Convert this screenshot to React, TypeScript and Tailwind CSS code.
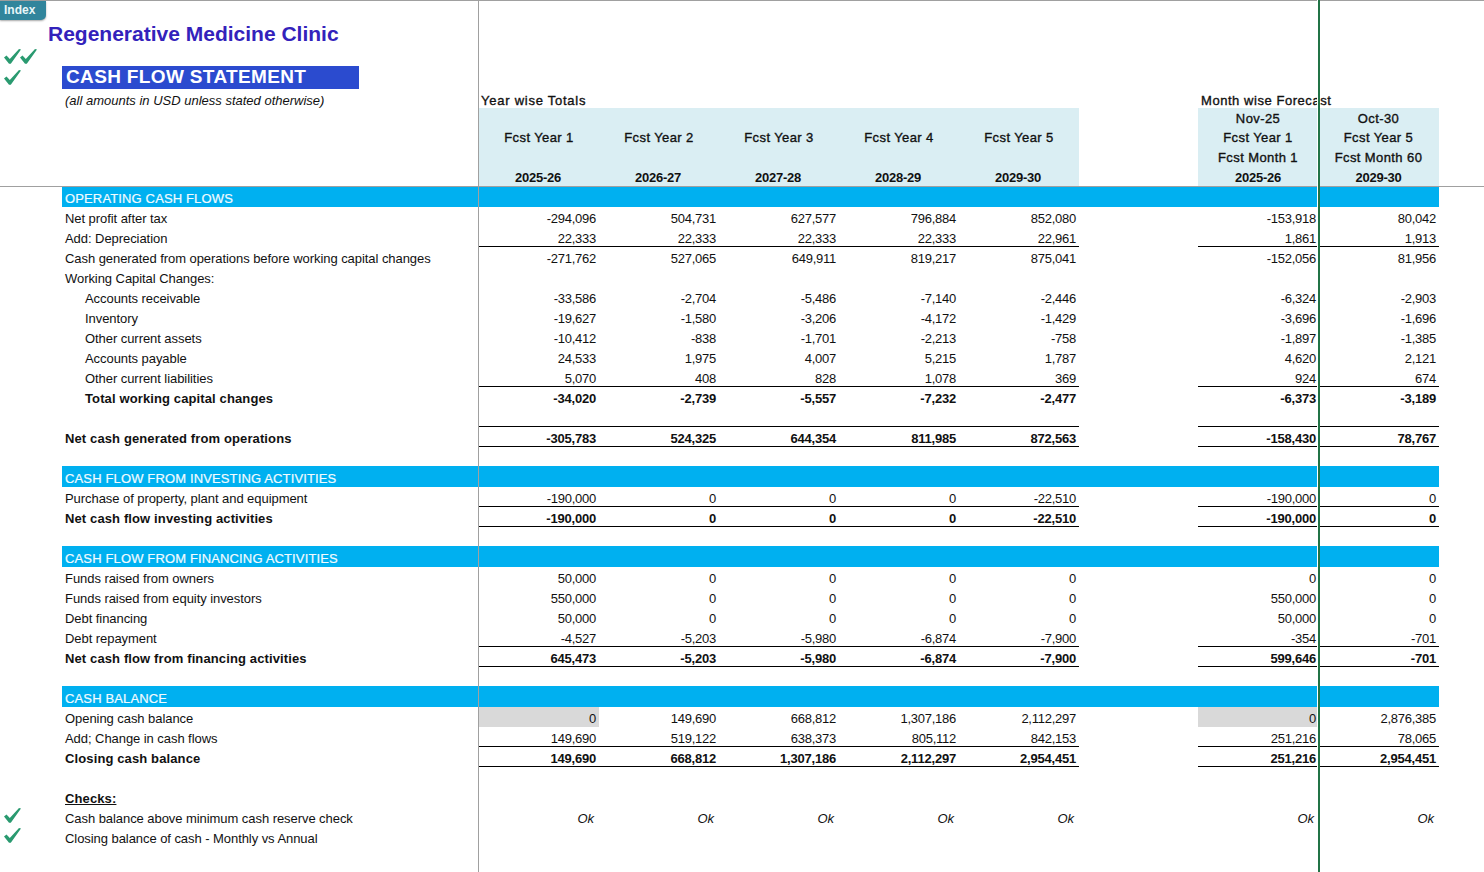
const GRID = "grid grid-cols-[62px_417px_repeat(5,120px)_119px_120px_121px] grid-rows-[20px] h-5 text-[13px] text-[#111]";

type R = {
  label?: string;
  vals?: string[];
  bold?: boolean;
  indent?: boolean;
  line?: boolean;
  grey?: boolean;
  ok?: boolean;
  check?: boolean;
  under?: boolean;
  band?: boolean;
};

const rows: R[] = [
  { band: true, label: "OPERATING CASH FLOWS" },
  { label: "Net profit after tax", vals: ["-294,096", "504,731", "627,577", "796,884", "852,080", "-153,918", "80,042"] },
  { label: "Add: Depreciation", vals: ["22,333", "22,333", "22,333", "22,333", "22,961", "1,861", "1,913"], line: true },
  { label: "Cash generated from operations before working capital changes", vals: ["-271,762", "527,065", "649,911", "819,217", "875,041", "-152,056", "81,956"] },
  { label: "Working Capital Changes:" },
  { label: "Accounts receivable", indent: true, vals: ["-33,586", "-2,704", "-5,486", "-7,140", "-2,446", "-6,324", "-2,903"] },
  { label: "Inventory", indent: true, vals: ["-19,627", "-1,580", "-3,206", "-4,172", "-1,429", "-3,696", "-1,696"] },
  { label: "Other current assets", indent: true, vals: ["-10,412", "-838", "-1,701", "-2,213", "-758", "-1,897", "-1,385"] },
  { label: "Accounts payable", indent: true, vals: ["24,533", "1,975", "4,007", "5,215", "1,787", "4,620", "2,121"] },
  { label: "Other current liabilities", indent: true, vals: ["5,070", "408", "828", "1,078", "369", "924", "674"], line: true },
  { label: "Total working capital changes", indent: true, bold: true, vals: ["-34,020", "-2,739", "-5,557", "-7,232", "-2,477", "-6,373", "-3,189"] },
  { line: true, vals: ["", "", "", "", "", "", ""] },
  { label: "Net cash generated from operations", bold: true, line: true, vals: ["-305,783", "524,325", "644,354", "811,985", "872,563", "-158,430", "78,767"] },
  {},
  { band: true, label: "CASH FLOW FROM INVESTING ACTIVITIES" },
  { label: "Purchase of property, plant and equipment", line: true, vals: ["-190,000", "0", "0", "0", "-22,510", "-190,000", "0"] },
  { label: "Net cash flow investing activities", bold: true, line: true, vals: ["-190,000", "0", "0", "0", "-22,510", "-190,000", "0"] },
  {},
  { band: true, label: "CASH FLOW FROM FINANCING ACTIVITIES" },
  { label: "Funds raised from owners", vals: ["50,000", "0", "0", "0", "0", "0", "0"] },
  { label: "Funds raised from equity investors", vals: ["550,000", "0", "0", "0", "0", "550,000", "0"] },
  { label: "Debt financing", vals: ["50,000", "0", "0", "0", "0", "50,000", "0"] },
  { label: "Debt repayment", line: true, vals: ["-4,527", "-5,203", "-5,980", "-6,874", "-7,900", "-354", "-701"] },
  { label: "Net cash flow from financing activities", bold: true, line: true, vals: ["645,473", "-5,203", "-5,980", "-6,874", "-7,900", "599,646", "-701"] },
  {},
  { band: true, label: "CASH BALANCE" },
  { label: "Opening cash balance", grey: true, vals: ["0", "149,690", "668,812", "1,307,186", "2,112,297", "0", "2,876,385"] },
  { label: "Add; Change in cash flows", line: true, vals: ["149,690", "519,122", "638,373", "805,112", "842,153", "251,216", "78,065"] },
  { label: "Closing cash balance", bold: true, line: true, vals: ["149,690", "668,812", "1,307,186", "2,112,297", "2,954,451", "251,216", "2,954,451"] },
  {},
  { label: "Checks:", bold: true, under: true },
  { label: "Cash balance above minimum cash reserve check", check: true, ok: true },
  { label: "Closing balance of cash - Monthly vs Annual", check: true },
];

function Check() {
  return (
    <svg width="17" height="15" viewBox="0 0 17 15" className="block shrink-0">
      <path d="M0 8.5 L2.5 6.5 L5.8 10 L15 0 L17 0.4 L6.8 14.8 L5 14.8 Z" fill="#2a9a70" />
    </svg>
  );
}

function Cell({ v, bold, line, grey, idx }: { v: string; bold?: boolean; line?: boolean; grey?: boolean; idx: number }) {
  const isGrey = grey && v === "0";
  return (
    <div
      className={
        "text-right leading-[16px] " +
        (idx === 5 ? "col-start-9 pr-[2px] " : "pr-[3px] ") +
        (bold ? "font-bold tracking-[-0.2px] " : "tracking-[-0.25px] ") +
        (line ? "border-b border-black " : "") +
        (isGrey ? "bg-[#d9d9d9] -mt-px pt-[5px] " : "pt-[4px] ")
      }
    >
      {v}
    </div>
  );
}

function Row({ r }: { r: R }) {
  if (r.band) {
    return (
      <div className="relative -mt-px h-[21px] ml-[62px] w-[1377px] bg-[#00b0f0] pl-[3px] pt-[5px] leading-[16px] whitespace-nowrap text-[13px] tracking-[0.14px] text-[#f2fbff] [-webkit-text-stroke:0.2px_#f2fbff]">
        {r.label}
      </div>
    );
  }
  return (
    <div className={GRID}>
      <div className="pl-[4px] pt-[1px]">{r.check ? <Check /> : null}</div>
      <div
        className={
          "leading-[16px] pt-[4px] whitespace-nowrap " +
          (r.indent ? "pl-[23px] " : "pl-[3px] ") +
          (r.bold ? "font-bold tracking-[0.12px] " : "tracking-[-0.06px] ") +
          (r.under ? "underline " : "")
        }
      >
        {r.label}
      </div>
      {r.vals
        ? r.vals.map((v, i) => <Cell key={i} idx={i} v={v} bold={r.bold} line={r.line} grey={r.grey} />)
        : null}
      {r.ok
        ? [0, 1, 2, 3, 4, 5, 6].map((i) => (
            <div
              key={i}
              className={"text-right leading-[16px] pt-[4px] italic text-[13px] " + (i === 5 ? "col-start-9 pr-[4px]" : "pr-[5px]")}
            >
              Ok
            </div>
          ))
        : null}
    </div>
  );
}

const HEAD = "h-5 flex items-center justify-center pt-[2px] text-[13px] tracking-[0.4px] [-webkit-text-stroke:0.35px_#111]";
const YEAR = "h-[19px] flex items-center justify-center pt-[3px] text-[13px] font-bold tracking-[-0.25px]";

function YearHead({ y, label }: { y: string; label: string }) {
  return (
    <div className="w-[120px]">
      <div className="h-[19px]" />
      <div className={HEAD}>{label}</div>
      <div className="h-5" />
      <div className={YEAR + " pr-[2px]"}>{y}</div>
    </div>
  );
}

function MonthHead({ a, b, c, d, w }: { a: string; b: string; c: string; d: string; w: string }) {
  return (
    <div className={w}>
      <div className={HEAD + " h-[19px] pt-0"}>{a}</div>
      <div className={HEAD}>{b}</div>
      <div className={HEAD}>{c}</div>
      <div className={YEAR}>{d}</div>
    </div>
  );
}

export default function App() {
  return (
    <div className="relative w-[1484px] h-[872px] overflow-hidden bg-white font-['Liberation_Sans',Arial,sans-serif] text-[#111]">
      <div className="relative z-10 h-[187px] border-t border-b border-[#a0a0a0] flex">
        <div className="w-[479px]">
          <div className="w-[46px] h-[19px] bg-[#31859c] rounded-br-[5px] shadow-[0_1px_2px_rgba(0,0,0,0.35)] flex items-center pl-[4px] pb-[2px] text-[12px] font-bold text-[#e8f6f8]">
            Index
          </div>
          <div className="ml-[48px] mt-px text-[21px] leading-[26px] font-bold text-[#3322bb] whitespace-nowrap">
            Regenerative Medicine Clinic
          </div>
          <div className="flex mt-[2px]">
            <div className="w-[62px] pl-[4px] flex flex-col gap-[6px]">
              <div className="flex -space-x-px">
                <Check />
                <Check />
              </div>
              <Check />
            </div>
            <div className="pt-[17px]">
              <div className="w-[297px] h-[23px] bg-[#2b4bcf] pl-[4px] flex items-center text-[19px] tracking-[0.35px] font-bold text-white whitespace-nowrap">
                CASH FLOW STATEMENT
              </div>
              <div className="pl-[3px] mt-[3px] text-[13px] leading-[18px] italic whitespace-nowrap">
                (all amounts in USD unless stated otherwise)
              </div>
            </div>
          </div>
        </div>
        <div className="flex-1 pt-[89px]">
          <div className="h-[18px] flex text-[13px] [-webkit-text-stroke:0.35px_#111]">
            <div className="w-[719px] pl-[2px] pt-px tracking-[0.75px]">Year wise Totals</div>
            <div className="pl-[3px] pt-px whitespace-nowrap tracking-[0.55px]">Month wise Forecast</div>
          </div>
          <div className="flex h-[78px]">
            <div className="w-[600px] bg-[#daeef3] flex">
              <YearHead label="Fcst Year 1" y="2025-26" />
              <YearHead label="Fcst Year 2" y="2026-27" />
              <YearHead label="Fcst Year 3" y="2027-28" />
              <YearHead label="Fcst Year 4" y="2028-29" />
              <YearHead label="Fcst Year 5" y="2029-30" />
            </div>
            <div className="w-[119px]" />
            <div className="w-[241px] bg-[#daeef3] flex">
              <MonthHead w="w-[120px]" a="Nov-25" b="Fcst Year 1" c="Fcst Month 1" d="2025-26" />
              <MonthHead w="w-[121px]" a="Oct-30" b="Fcst Year 5" c="Fcst Month 60" d="2029-30" />
            </div>
          </div>
        </div>
      </div>
      <div>
        {rows.map((r, i) => (
          <Row key={i} r={r} />
        ))}
      </div>
      <div className="absolute z-20 top-0 bottom-0 left-[478px] w-px bg-[#a0a0a0]" />
      <div className="absolute z-20 top-0 bottom-0 left-[1317px] w-[3px] border-l border-white bg-[#217346]" />
    </div>
  );
}
